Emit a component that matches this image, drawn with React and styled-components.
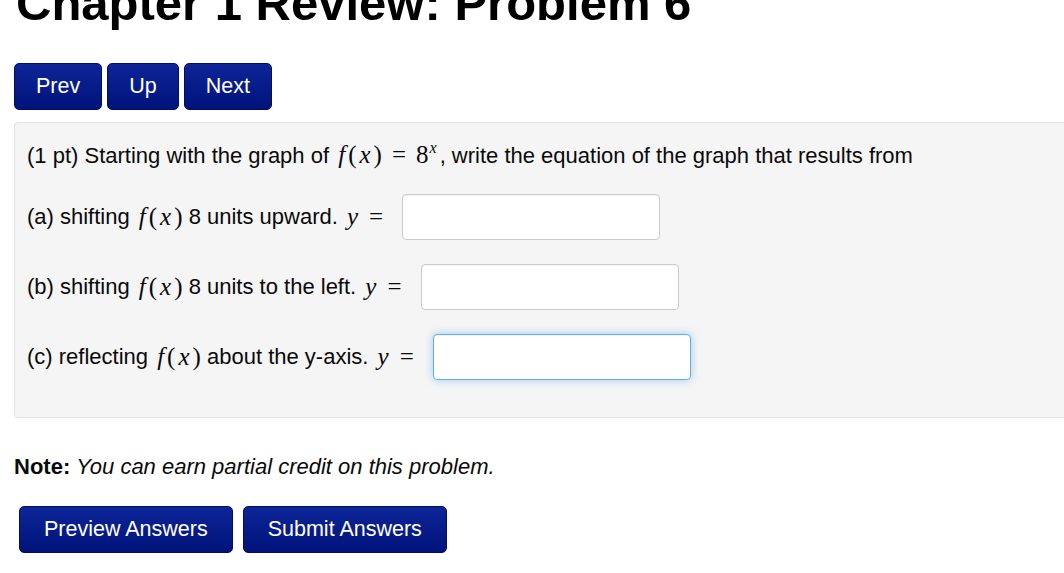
import React from "react";
import styled, { createGlobalStyle } from "styled-components";

const GlobalStyle = createGlobalStyle`
  html, body {
    margin: 0;
    padding: 0;
    background: #ffffff;
    overflow: hidden;
  }
  body {
    font-family: "Liberation Sans", Arial, Helvetica, sans-serif;
    color: #0a0a0a;
  }
`;

const Page = styled.div`
  padding-left: 14px;
  width: 1064px;
  box-sizing: border-box;
  overflow: hidden;
`;

const Title = styled.h1`
  margin: -23px 0 0 2px;
  font-size: 49px;
  line-height: 1.1;
  font-weight: bold;
  white-space: nowrap;
  color: #000;
`;

const NavBar = styled.div`
  display: flex;
  gap: 5px;
  margin-top: 32px;
`;

const BlueButton = styled.button`
  height: 47px;
  padding: 0 ${(p) => p.$pad || 21}px;
  font-family: "Liberation Sans", Arial, sans-serif;
  font-size: 21.5px;
  color: #fff;
  background: linear-gradient(#0d2598, #00137a);
  border: 1px solid #00105e;
  border-radius: 5px;
  cursor: pointer;
`;

const Panel = styled.div`
  margin-top: 12px;
  width: 1100px;
  box-sizing: border-box;
  padding: 20px 12px 37px;
  background: #f5f5f5;
  border: 1px solid #e3e3e3;
  border-radius: 4px;
  font-size: 22px;
`;

const Prompt = styled.div`
  line-height: 24px;
  white-space: nowrap;
  margin-bottom: 26px;
`;

const Rows = styled.div`
  display: flex;
  flex-direction: column;
  gap: 24px;
`;

const Row = styled.div`
  display: flex;
  align-items: center;
  height: 46px;
  white-space: pre;
`;

const Math = styled.span`
  font-family: "Liberation Serif", "Times New Roman", serif;
  font-size: 25px;
  white-space: nowrap;
`;

const Var = styled.i`
  font-style: italic;
  padding: 0 3px;
`;

const Sup = styled.sup`
  font-size: 16px;
  font-style: italic;
  vertical-align: 10px;
  line-height: 0;
  padding: 0 3px 0 1px;
`;

const Eq = styled.span`
  padding: 0 ${(p) => p.$pad || 8}px;
`;

const AnswerInput = styled.input`
  width: 258px;
  height: 46px;
  box-sizing: border-box;
  margin-left: 11px;
  background: #fff;
  border: 1px solid ${(p) => (p.$focus ? "#66afe9" : "#cccccc")};
  border-radius: 4px;
  box-shadow: ${(p) =>
    p.$focus
      ? "inset 0 1px 1px rgba(0,0,0,0.05), 0 0 8px rgba(102,175,233,0.6)"
      : "inset 0 1px 1px rgba(0,0,0,0.05)"};
  outline: none;
`;

const Note = styled.p`
  margin: 37px 0 0;
  font-size: 22px;
  line-height: 24px;

  b {
    font-weight: bold;
  }
  em {
    font-style: italic;
  }
`;

const SubmitBar = styled.div`
  display: flex;
  gap: 10px;
  margin: 27px 0 0 5px;
`;

const Fx = () => (
  <Math>
    <Var>f</Var>(<Var>x</Var>)
  </Math>
);

const YEq = () => (
  <Math>
    <Var>y</Var>
    <Eq>=</Eq>
  </Math>
);

const parts = [
  { label: "(a) shifting ", rest: " 8 units upward. " },
  { label: "(b) shifting ", rest: " 8 units to the left. " },
  { label: "(c) reflecting ", rest: " about the y-axis. ", focus: true },
];

export default function App() {
  return (
    <>
      <GlobalStyle />
      <Page>
        <Title>Chapter 1 Review: Problem 6</Title>
        <NavBar>
          <BlueButton>Prev</BlueButton>
          <BlueButton>Up</BlueButton>
          <BlueButton>Next</BlueButton>
        </NavBar>

        <Panel>
          <Prompt>
            (1 pt) Starting with the graph of{" "}
            <Math>
              <Var>f</Var>(<Var>x</Var>)<Eq $pad={10}>=</Eq>8<Sup>x</Sup>
            </Math>
            , write the equation of the graph that results from
          </Prompt>
          <Rows>
            {parts.map((p) => (
              <Row key={p.label}>
                {p.label}
                <Fx />
                {p.rest}
                <YEq />
                <AnswerInput type="text" $focus={p.focus} />
              </Row>
            ))}
          </Rows>
        </Panel>

        <Note>
          <b>Note:</b> <em>You can earn partial credit on this problem.</em>
        </Note>

        <SubmitBar>
          <BlueButton $pad={24}>Preview Answers</BlueButton>
          <BlueButton $pad={24}>Submit Answers</BlueButton>
        </SubmitBar>
      </Page>
    </>
  );
}
